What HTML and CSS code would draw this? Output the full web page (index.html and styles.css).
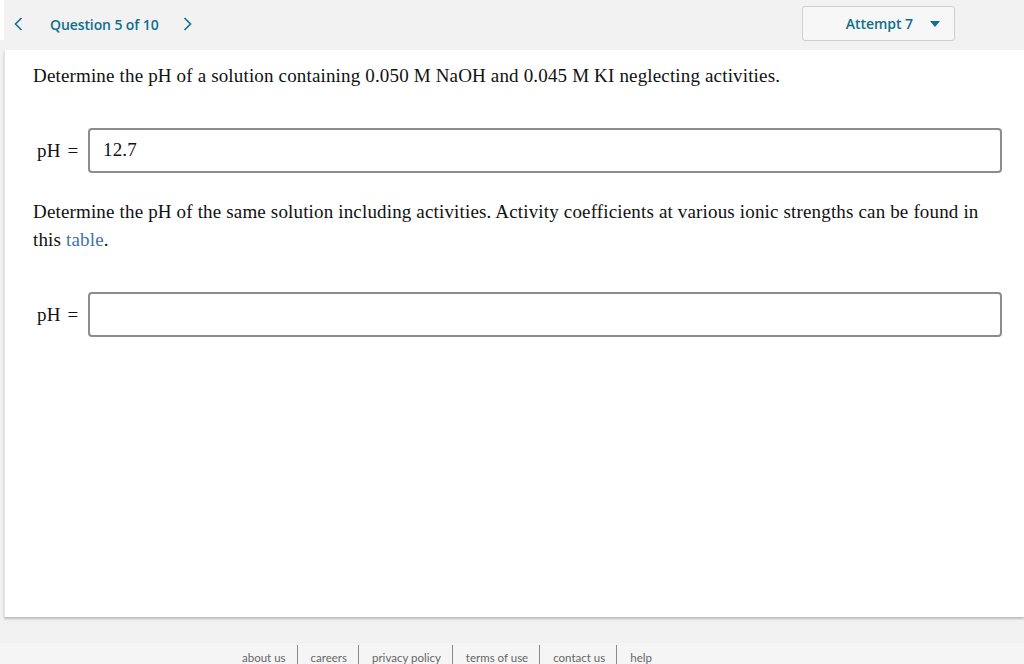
FILE: index.html
```html
<!DOCTYPE html>
<html>
<head>
<meta charset="utf-8">
<link rel="stylesheet" href="styles.css">
</head>
<body>
<header class="topbar">
  <div class="strip"></div>
  <nav class="qnav">
    <span class="arrow prev"><svg width="9" height="14" viewBox="0 0 9 14"><path d="M7.5 1 L1.5 7 L7.5 13" fill="none" stroke="#0f6f8c" stroke-width="1.6"/></svg></span>
    <span class="qtitle">Question 5 of 10</span>
    <span class="arrow next"><svg width="9" height="14" viewBox="0 0 9 14"><path d="M1.5 1 L7.5 7 L1.5 13" fill="none" stroke="#0f6f8c" stroke-width="1.6"/></svg></span>
  </nav>
  <div class="attempt">
    <span>Attempt 7</span>
    <svg width="10" height="6" viewBox="0 0 10 6"><path d="M0 0 H10 L5 6 Z" fill="#0f6f8c"/></svg>
  </div>
</header>
<main class="panel">
  <p class="q">Determine the pH of a solution containing 0.050 M NaOH and 0.045 M KI neglecting activities.</p>
  <div class="answer">
    <span class="label">pH =</span>
    <div class="box">12.7</div>
  </div>
  <p class="q q2">Determine the pH of the same solution including activities. Activity coefficients at various ionic strengths can be found in this <a class="link">table</a>.</p>
  <div class="answer">
    <span class="label">pH =</span>
    <div class="box"></div>
  </div>
</main>
<footer class="footer">
  <div class="links">
    <span>about us</span><i></i>
    <span>careers</span><i></i>
    <span>privacy policy</span><i></i>
    <span>terms of use</span><i></i>
    <span>contact us</span><i></i>
    <span>help</span>
  </div>
</footer>
</body>
</html>
```
FILE: styles.css
```css
html, body { margin: 0; padding: 0; }
body {
  background: #f2f2f2;
  width: 1024px;
  height: 664px;
  overflow: hidden;
}
.topbar {
  height: 50px;
  display: flex;
  align-items: flex-start;
}
.strip {
  width: 4px;
  height: 40px;
  background: #fff;
}
.qnav {
  display: flex;
  align-items: center;
  height: 48px;
  font-family: "Open Sans", sans-serif;
  font-weight: 600;
  font-size: 14px;
  color: #0f6f8c;
}
.arrow { display: flex; }
.prev { margin-left: 10px; }
.qtitle { margin-left: 27px; letter-spacing: -0.1px; }
.next { margin-left: 24px; }
.attempt {
  margin-left: auto;
  margin-right: 69px;
  margin-top: 6px;
  width: 153px;
  height: 35px;
  border: 1px solid #cfcfcf;
  border-radius: 3px;
  background: #f7f7f7;
  display: flex;
  align-items: center;
  justify-content: flex-end;
  padding-right: 14px;
  box-sizing: border-box;
  font-family: "Open Sans", sans-serif;
  font-weight: 600;
  font-size: 14px;
  color: #0f6f8c;
  gap: 17px;
  letter-spacing: -0.05px;
}
.panel {
  margin-left: 4px;
  height: 567px;
  background: #fff;
  border-left: 1px solid #e4e4e4;
  box-shadow: 0 2px 2px rgba(0,0,0,0.22);
  padding: 12px 22px 0 28px;
  box-sizing: border-box;
  font-family: "Liberation Serif", "Times New Roman", serif;
  font-size: 19px;
  letter-spacing: 0.16px;
  color: #111;
}
.q {
  margin: 0;
  line-height: 28px;
}
.answer {
  display: flex;
  align-items: center;
  margin: 38px 0 25px 0;
}
.label {
  width: 55px;
  padding-left: 4px;
  box-sizing: border-box;
  word-spacing: 2px;
}
.box {
  flex: 1;
  height: 45px;
  border: 2px solid #8c8c8c;
  border-radius: 4px;
  box-sizing: border-box;
  padding-left: 13px;
  display: flex;
  align-items: center;
  padding-bottom: 1px;
}
.link { color: #3f72b0; }
.footer {
  margin-top: 26px;
  background: #f5f5f5;
  height: 40px;
}
.links {
  display: flex;
  align-items: flex-start;
  padding-left: 242px;
  padding-top: 3px;
  font-family: Lato, sans-serif;
  font-size: 11.5px;
  color: #666;
}
.links span { line-height: 16px; padding-top: 4px; }
.links i {
  display: block;
  width: 1px;
  height: 30px;
  background: #8a8a8a;
  margin: -1px 13px 0 11px;
}
```
